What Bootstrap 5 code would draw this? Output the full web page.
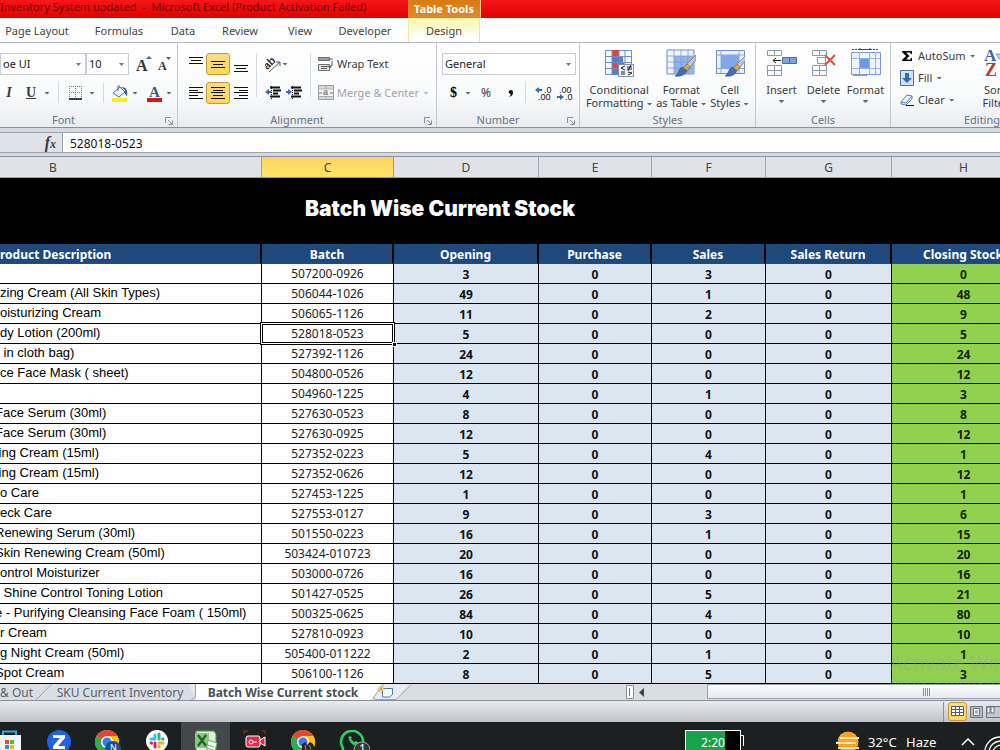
<!DOCTYPE html>
<html lang="en">
<head>
<meta charset="utf-8">
<meta name="viewport" content="width=device-width, initial-scale=1">
<title>Inventory System updated - Microsoft Excel</title>
<link href="https://cdn.jsdelivr.net/npm/bootstrap@5.3.0/dist/css/bootstrap.min.css" rel="stylesheet">
<style>
  body { font-family: "Noto Sans", "Open Sans", sans-serif; font-size: 11px; line-height: 14px; color: #3b3b3b; background: #dfe3e9; }
  button { font: inherit; color: inherit; background: none; border: 0; padding: 0; text-align: center; white-space: nowrap; }
  svg { display: block; flex: none; }
  .fs-12 { font-size: 12px; line-height: 16px; }

  .titlebar { height: 18px; background: linear-gradient(#f51818, #e00000); color: #6a0505; }
  .titlebar .doc-name { width: 408px; line-height: 14px; }
  .tool-tab { width: 73px; font-weight: 700; line-height: 18px; color: #fff; background: linear-gradient(#d97a14, #e08a2c); border-right: 1px solid #f3c48a; }
  .menu-tabs { height: 25px; background: #fff; border-bottom: 1px solid #b3b7bd; }
  .menu-tabs a { color: #444; text-decoration: none; text-align: center; line-height: 26px; }
  .menu-tabs .ctx { background: linear-gradient(#fdf6a8, #fff 80%); border: solid #f1e3a0; border-width: 0 1px; }

  .ribbon { height: 85px; background: linear-gradient(#fff, #fafbfc 60%, #e9ecf0); border-bottom: 1px solid #8a9099; }
  .tool-group { border-right: 1px solid #c3c8cf; height: 84px; overflow: hidden; }
  .tool-body { height: 69px; padding-top: 10px; }
  .tool-row { height: 22px; margin-bottom: 7px; }
  .tool-label { color: #6b7280; text-align: center; position: relative; line-height: 15px; }
  .launcher { position: absolute; right: 4px; top: 5px; }
  .vline { width: 1px; height: 20px; background: #d5d8dd; flex: none; }
  .combo { height: 22px; font-size: 11px; border: 1px solid #c9cdd3; border-radius: 0; padding: 0 2px; color: #222; background: #fff url("data:image/svg+xml,%3Csvg xmlns='http://www.w3.org/2000/svg' width='6' height='3'%3E%3Cpath d='M0 0h5L2.500 3z' fill='%23777'/%3E%3C/svg%3E") no-repeat right 3px center; appearance: none; }
  .tool-on { background: linear-gradient(#fbdc84, #fdd75e); border: 1px solid #c69a3c; border-radius: 3px; }
  .ic-btn { width: 23px; height: 22px; display: flex; align-items: center; justify-content: center; }
  .tall { display: flex; flex-direction: column; align-items: center; line-height: 13px; }
  .tall svg.pic { margin-bottom: 6px; }
  .arrow { display: inline-block; width: 6px; height: 3px; background: #666; clip-path: polygon(0 0, 100% 0, 50% 100%); vertical-align: middle; flex: none; }
  .dim { color: #a0a3a8; }
  .dim .arrow { background: #b5b8bd; }

  .formula-bar { height: 29px; padding: 4px 0 3px; background: #d5d9df; border-bottom: 1px solid #8a9099; }
  .fx-box { width: 63px; background: #dfe3e9; border: 1px solid #9da3ac; border-left: 0; }
  .fx-box span { font: italic 700 16px/19px "Liberation Serif", serif; }
  .fx-box .sub-x { font-size: 12px; }
  .formula-bar input { border: solid #9da3ac; border-width: 1px 0; padding: 2px 7px 0; font-size: 12px; color: #111; outline: 0; min-width: 0; }

  .sheet-area { min-height: 0; background: #fff; position: relative; }
  .grid-sheet { table-layout: fixed; width: calc(100% + 36px); border-collapse: separate; border-spacing: 0; color: #000; }
  .grid-sheet th, .grid-sheet td { padding: 0; text-align: center; overflow: hidden; white-space: nowrap; height: 20px; line-height: 19px; border: solid #000; border-width: 0 1px 1px 0; }
  .grid-sheet .letters th { height: 21px; padding-top: 2px; font-weight: 400; font-size: 12px; line-height: 18px; background: #dfe2e8; color: #444; border-color: #9da3ac; }
  .grid-sheet .letters .picked { background: linear-gradient(#fdd264, #fee667); border-color: #b59a4a; }
  .grid-sheet .banner th { height: 66px; background: #000; color: #fff; font: 900 21px/62px Inter, "Liberation Sans", sans-serif; padding: 0 156px 4px 0; border: 0; }
  .grid-sheet .heads th { background: #1f497d; color: #fff; font-size: 12px; line-height: 17px; padding-top: 2px; font-weight: 700; border-right-width: 2px; border-bottom-color: #3a4657; }
  .grid-sheet .first { text-align: left; }
  .grid-sheet .letters .first { text-align: center; padding-right: 155px; }
  .grid-sheet td { font-size: 12px; line-height: 18px; }
  .grid-sheet td.first { font-family: "Liberation Sans", sans-serif; font-size: 13px; line-height: 17px; padding-bottom: 2px; }
  .grid-sheet td.scrolled { text-indent: -5px; }
  .grid-sheet td.batch { color: #222; }
  .grid-sheet td.qty { background: #dce6f1; color: #111; font-weight: 700; line-height: 17px; padding-top: 2px; }
  .grid-sheet td.closing { background: #92d050; color: #14240a; font-weight: 700; line-height: 17px; padding-top: 2px; }
  .grid-sheet td.current { overflow: visible; position: relative; }
  .cell-cursor { position: absolute; inset: -2px; border: 1px solid #000; box-shadow: inset 0 0 0 1px #fff, inset 0 0 0 2px #000; }
  .cell-cursor::after { content: ""; position: absolute; right: -3px; bottom: -3px; width: 5px; height: 5px; background: #000; border: 1px solid #fff; }
  .watermark { position: absolute; left: 890px; bottom: -6px; color: rgba(160,160,170,.4); font-size: 20px; line-height: 22px; white-space: nowrap; }
  .watermark small { display: block; font-size: 14px; line-height: 16px; }

  .sheet-tabs { height: 17px; background: #d9dde4; border-bottom: 1px solid #8a9099; color: #5a6068; font-size: 12px; line-height: 17px; }
  .sheet-tabs .active-tab { background: #fff; font-weight: 700; color: #4a4f57; }
  .thumb { background: linear-gradient(#fbfcfd, #e6e9f0); border: 1px solid #9da3ac; border-right: 0; height: 15px; margin-left: 61px; padding-left: 215px; }
  .status-strip { height: 21px; background: linear-gradient(#e8eaee, #bfc4cc); }
  .taskbar { height: 28px; background: #1c2021; color: #fff; }
  .task { width: 49px; height: 28px; padding-top: 8px; display: flex; justify-content: center; align-items: flex-start; overflow: hidden; flex: none; position: relative; }
  .task.open-app { background: #43494a; }
  .battery { width: 56px; height: 24px; border: 1px solid #fff; background: linear-gradient(90deg, #16a34a 72%, #000 72%); font-size: 12px; line-height: 23px; text-align: center; }
</style>
</head>
<body class="vh-100 d-flex flex-column overflow-hidden">

<svg width="0" height="0" class="position-absolute" aria-hidden="true">
  <defs>
    <symbol id="tablegrid" viewBox="0 0 30 30"><path d="M1 1h27v24H1z" fill="#eef4fd" stroke="#6e8fc0"/><path d="M8 7h20v18H8z" fill="#8fb4ec"/><path d="M1 7h27M1 13h27M1 19h27M8 1v24M15 1v24M22 1v24" stroke="#7f9ccb" stroke-width=".8" fill="none"/></symbol>
    <symbol id="brush" viewBox="0 0 22 22"><path d="M21 0v5L13 15l-4-3z" fill="#c3c6ca" stroke="#77736c" stroke-width=".7"/><path d="M12 9l3 3-3 4-4-3z" fill="#d9a441" stroke="#8a6420" stroke-width=".6"/><path d="M7 12l5 4c-2 4-6 6-12 5 4-2 3-7 7-9z" fill="#466ea8" stroke="#2f5088" stroke-width=".6"/></symbol>
    <symbol id="chrome" viewBox="0 0 24 24"><circle cx="12" cy="12" r="12" fill="#fbc116"/><path d="M12 12L1.600 6A12 12 0 0 1 22.400 6z" fill="#ea4335"/><path d="M12 12L1.600 6A12 12 0 0 0 12 24l5-9z" fill="#34a853"/><path d="M12 6h10.400A12 12 0 0 1 12 24l5-9z" fill="#fbc116"/><circle cx="12" cy="12" r="6" fill="#fff"/><circle cx="12" cy="12" r="4.600" fill="#3b7ded"/></symbol>
    <symbol id="corner" viewBox="0 0 8 8"><path d="M.5 6V.5H6M3 3l4 4M7.500 3.500v4h-4" stroke="#8a9099" fill="none"/></symbol>
  </defs>
</svg>

<header class="titlebar d-flex overflow-hidden">
  <div class="doc-name text-nowrap">Inventory System updated&nbsp; -&nbsp; Microsoft Excel (Product Activation Failed)</div>
  <div class="tool-tab text-center text-nowrap">Table Tools</div>
</header>

<nav class="menu-tabs d-flex flex-shrink-0" aria-label="Ribbon tabs">
  <a href="#" style="width:74px">Page Layout</a>
  <a href="#" style="width:90px">Formulas</a>
  <a href="#" style="width:38px">Data</a>
  <a href="#" style="width:76px">Review</a>
  <a href="#" style="width:44px">View</a>
  <a href="#" style="width:86px">Developer</a>
  <a href="#" class="ctx" style="width:72px">Design</a>
</nav>

<section class="ribbon d-flex flex-shrink-0 overflow-hidden" aria-label="Ribbon">
  <div class="tool-group flex-shrink-0" style="width:178px">
    <div class="tool-body">
      <div class="tool-row d-flex align-items-center">
        <select class="combo" aria-label="Font" style="width:86px"><option>oe UI</option></select>
        <select class="combo" aria-label="Font size" style="width:43px"><option>10</option></select>
        <button class="ic-btn ms-1" aria-label="Grow font"><svg width="18" height="18"><text x="0" y="16" font-family="Liberation Serif" font-weight="700" font-size="16" fill="#333">A</text><path d="M10 4l3-3 3 3z" fill="#3a64a0"/></svg></button>
        <button class="ic-btn" aria-label="Shrink font" style="width:20px"><svg width="18" height="18"><text x="1" y="15" font-family="Liberation Serif" font-weight="700" font-size="12" fill="#333">A</text><path d="M9 2h5l-2.500 3z" fill="#3a64a0"/></svg></button>
      </div>
      <div class="tool-row d-flex align-items-center">
        <button class="ic-btn" aria-label="Italic" style="width:18px"><i style="font:italic 700 14px 'Liberation Serif',serif">I</i></button>
        <button class="ic-btn" aria-label="Underline" style="width:26px"><u style="font:700 14px 'Liberation Serif',serif">U</u></button>
        <span class="arrow"></span><span class="vline ms-2 me-2"></span>
        <button class="ic-btn" aria-label="Borders" style="width:18px"><svg width="14" height="14"><path d="M.5 0v12M6.500 0v12M12.500 0v12M0 .5h13M0 6.500h13" stroke="#777" stroke-dasharray="1 1" fill="none"/><path d="M0 13h13" stroke="#000" stroke-width="1.500"/></svg></button>
        <span class="arrow ms-1"></span><span class="vline ms-2" style="margin-right:6px"></span>
        <button class="ic-btn" aria-label="Fill color" style="width:18px"><svg width="17" height="17"><path d="M2 8l7-6 5 5-6 5z" fill="#e8f0fa" stroke="#4a6fa5"/><path d="M7 6V1h2" stroke="#4a6fa5" fill="none"/><path d="M10 2c6 0 7 4 6 9-2-1-3-4-2-6z" fill="#2f5fae"/><path d="M1 13h15v4H1z" fill="#f7ee1d"/></svg></button>
        <span class="arrow ms-1"></span>
        <button class="ic-btn ms-1" aria-label="Font color" style="width:24px"><svg width="17" height="17"><text x="3" y="12" font-family="Liberation Serif" font-weight="700" font-size="15" fill="#3a5a94">A</text><path d="M1 13h15v4H1z" fill="#d01a1a"/></svg></button>
        <span class="arrow"></span>
      </div>
    </div>
    <div class="tool-label" style="padding-right:50px">Font<svg class="launcher" width="8" height="8"><use href="#corner"/></svg></div>
  </div>

  <div class="tool-group flex-shrink-0" style="width:259px">
    <div class="tool-body d-flex">
      <div class="ps-1" style="width:78px">
        <div class="tool-row d-flex">
          <button class="ic-btn ms-1" aria-label="Top align" style="width:20px"><svg width="14" height="20"><path d="M0 3.500h14M2 6.500h10M0 9.500h14" stroke="#111"/></svg></button>
          <button class="ic-btn tool-on" aria-label="Middle align" style="width:24px"><svg width="14" height="14"><path d="M0 4.500h14M2 7.500h10M0 10.500h14" stroke="#111"/></svg></button>
          <button class="ic-btn" aria-label="Bottom align" style="width:22px"><svg width="14" height="20"><path d="M0 11.500h14M2 14.500h10M0 17.500h14" stroke="#111"/></svg></button>
        </div>
        <div class="tool-row d-flex">
          <button class="ic-btn ms-1" aria-label="Align left" style="width:20px"><svg width="14" height="12"><path d="M0 .5h14M0 3.500h9M0 5.500h14M0 8.500h9M0 11.500h14" stroke="#111"/></svg></button>
          <button class="ic-btn tool-on" aria-label="Center" style="width:24px"><svg width="14" height="12"><path d="M0 .5h14M2 3.500h10M0 5.500h14M2 8.500h10M0 11.500h14" stroke="#111"/></svg></button>
          <button class="ic-btn" aria-label="Align right" style="width:22px"><svg width="14" height="12"><path d="M0 .5h14M5 3.500h9M0 5.500h14M5 8.500h9M0 11.500h14" stroke="#111"/></svg></button>
        </div>
      </div>
      <span class="vline h-75"></span>
      <div class="ps-2" style="width:53px">
        <div class="tool-row d-flex align-items-center">
          <button aria-label="Orientation"><svg width="17" height="17"><text transform="rotate(-45 5 10)" x="0" y="11" font-family="Liberation Sans" font-weight="700" font-size="11" fill="#333">ab</text><path d="M4 16L15 6M11 6h4v4" stroke="#555" fill="none"/></svg></button><span class="arrow"></span>
        </div>
        <div class="tool-row d-flex align-items-center">
          <button aria-label="Decrease indent"><svg width="17" height="14"><path d="M5 1.500h10M8 4.500h8M8 7.500h5M5 10.500h10" stroke="#111" stroke-width="2"/><path d="M6.500 0v14" stroke="#111" stroke-dasharray="1 1"/><path d="M0 6l4-3v2h2v2H4v2z" fill="#3a6bb0"/></svg></button>
          <button class="ms-1" aria-label="Increase indent"><svg width="17" height="14"><path d="M5 1.500h10M8 4.500h8M8 7.500h5M5 10.500h10" stroke="#111" stroke-width="2"/><path d="M6.500 0v14" stroke="#111" stroke-dasharray="1 1"/><path d="M6 6L2 3v2H0v2h2v2z" fill="#3a6bb0"/></svg></button>
        </div>
      </div>
      <span class="vline h-75"></span>
      <div style="padding-left:7px">
        <div class="tool-row d-flex align-items-center">
          <button class="d-flex align-items-center"><svg style="margin-right:3px" width="16" height="16"><path d="M.5 1.500h11v3H.5zM.5 8.500h11v6H.5z" fill="#dce7f7" stroke="#68707c"/><path d="M0 3h15M3 10.500h8M3 12.500h6" stroke="#6e5540"/><path d="M14 5v5h-2l1 2" stroke="#2f5fae" fill="none"/></svg>Wrap Text</button>
        </div>
        <div class="tool-row d-flex align-items-center">
          <button class="d-flex align-items-center dim"><svg style="margin-right:3px" width="16" height="16"><path d="M.5.5h15v14H.5z" fill="#d7d9dc" stroke="#9a9da2"/><path d="M0 4h16M0 11.500h16M8 0v4M8 11v4" stroke="#aaa"/><path d="M1 4.500h14v6.500H1z" fill="#f3f3f3"/><text x="5" y="10" font-size="9" font-family="Liberation Sans" font-weight="700" fill="#777">a</text><path d="M1 8h3M12 8h3" stroke="#777"/></svg>Merge &amp; Center<span class="arrow ms-1"></span></button>
        </div>
      </div>
    </div>
    <div class="tool-label" style="padding-right:20px">Alignment<svg class="launcher" width="8" height="8"><use href="#corner"/></svg></div>
  </div>

  <div class="tool-group flex-shrink-0" style="width:143px">
    <div class="tool-body" style="padding-left:5px">
      <div class="tool-row"><select class="combo d-block" aria-label="Number format" style="width:134px"><option>General</option></select></div>
      <div class="tool-row d-flex align-items-center">
        <button class="ic-btn" aria-label="Currency"><b class="text-black" style="font:700 14px 'Liberation Serif',serif">$</b></button>
        <span class="arrow"></span>
        <button class="ic-btn fs-12" aria-label="Percent" style="width:30px">%</button>
        <button class="ic-btn" aria-label="Comma" style="width:20px"><svg width="6" height="9"><path d="M3 1a2 2 0 0 1 2 2c0 3-1 4-4 5 1-1 2-2 1.500-3A2 2 0 0 1 3 1z" fill="#111"/></svg></button>
        <span class="vline ms-1"></span>
        <button class="ic-btn ms-2" aria-label="Increase decimal" style="width:18px"><svg width="17" height="15" font-family="Liberation Sans" font-size="9" fill="#111"><text x="9" y="7">.0</text><text x="3" y="14">.00</text><path d="M0 4l4-3v2h3v2H4v2z" fill="#3a6bb0"/></svg></button>
        <button class="ic-btn ms-1" aria-label="Decrease decimal" style="width:18px"><svg width="17" height="15" font-family="Liberation Sans" font-size="9" fill="#111"><text x="2" y="7">.00</text><text x="8" y="14">.0</text><path d="M7 11L3 8v2H0v2h3v2z" fill="#3a6bb0"/></svg></button>
      </div>
    </div>
    <div class="tool-label" style="padding-right:20px">Number<svg class="launcher" width="8" height="8"><use href="#corner"/></svg></div>
  </div>

  <div class="tool-group flex-shrink-0" style="width:176px">
    <div class="tool-body d-flex pt-1">
      <button class="tall" style="width:79px"><svg class="pic" width="30" height="30"><path d="M1.500 3.500h26v24h-26z" fill="#f4f8fe" stroke="#6e8fc0"/><path d="M8 3h7v6H8zM8 15h12v6H8z" fill="#e2483c"/><path d="M8 9h11v6H8zM8 21h6v6H8z" fill="#4f7fd0"/><path d="M1.500 9.500h26M1.500 15.500h26M1.500 21.500h26M8 3v24M15 3v24M21 3v24" stroke="#6e8fc0" fill="none"/><path d="M14.500 17.500h15v12h-15z" fill="#f2f4f6" stroke="#8090a5"/><path d="M21 19l-4 2 4 2M17 25h4M23 20h5M23 22h5M27 18l-3 6M17 27h4M24 25l4 1-4 2" stroke="#222" fill="none"/></svg>Conditional<span>Formatting <span class="arrow"></span></span></button>
      <button class="tall" style="width:46px"><svg class="pic" width="30" height="30"><use href="#tablegrid" x="0" y="2" width="30" height="30"/><use href="#brush" x="9" y="8" width="22" height="22"/></svg>Format<span>as Table <span class="arrow"></span></span></button>
      <button class="tall" style="width:51px"><svg class="pic" width="30" height="30"><path d="M1.500 3.500h28v23h-28z" fill="#eaf2fd" stroke="#6e8fc0"/><path d="M6 8h18v13H6z" fill="#7ea8ea"/><path d="M1 8h28M1 21.500h28M6 3v23M24 3v23" stroke="#8aa8d2"/><use href="#brush" x="10" y="8" width="22" height="22"/></svg>Cell<span>Styles <span class="arrow"></span></span></button>
    </div>
    <div class="tool-label">Styles</div>
  </div>

  <div class="tool-group flex-shrink-0" style="width:135px">
    <div class="tool-body d-flex pt-1 ps-1">
      <button class="tall" style="width:43px"><svg class="pic" width="32" height="30"><g fill="#fff" stroke="#8a9bb4"><path d="M1.500 3.500h14v5h-14zM8.500 3v5M1.500 18.500h14v10h-14zM8.500 18v10M1 23.500h14"/></g><path d="M16.500 10.500h14v6h-14z" fill="#7da4e2" stroke="#466ea8"/><path d="M23.500 10v6" stroke="#466ea8"/><path d="M7 13.500h8M10 11l-3 2.500 3 2.500" stroke="#222" fill="none"/></svg>Insert<span class="arrow mt-1"></span></button>
      <button class="tall" style="width:41px"><svg class="pic" width="32" height="30"><g fill="#fff" stroke="#8a9bb4"><path d="M4.500 3.500h14v5h-14zM11.500 3v5M4.500 18.500h14v10h-14zM11.500 18v10M4 23.500h14"/></g><path d="M9.500 10.500h8v6h-8z" fill="none" stroke="#333" stroke-dasharray="1 1"/><path d="M17 8l10 10M27 8L17 18" stroke="#e4513d" stroke-width="2"/></svg>Delete<span class="arrow mt-1"></span></button>
      <button class="tall" style="width:43px"><svg class="pic" width="32" height="30"><path d="M2 2.500h27M10 2.500h10M10 1v3M20 1v3" stroke="#2a4a7c" stroke-dasharray="2 1"/><path d="M1.500 5.500h29v22h-29z" fill="#edf4fd" stroke="#7f9bc6"/><path d="M1 11.500h29M1 21.500h29M9.500 5v22M19.500 5v22M25.500 5v22" stroke="#9bb3d8"/><path d="M10 12h9v9h-9z" fill="#6d9ae4"/><path d="M3 28h14" stroke="#7f9bc6" stroke-width="2"/></svg>Format<span class="arrow mt-1"></span></button>
    </div>
    <div class="tool-label">Cells</div>
  </div>

  <div class="tool-group flex-grow-1 border-end-0">
    <div class="tool-body d-flex pt-1 ps-2">
      <div class="d-flex flex-column flex-shrink-0" style="width:84px">
        <button class="d-flex align-items-center" style="height:18px"><svg style="margin:0 5px 0 2px" width="12" height="12"><path d="M1 1h10v3h-1L9 2.500H5L8.500 6 5 9.500h4.500L10 8h1v3H1v-1l4-4-4-4z" fill="#000"/></svg>AutoSum<span class="arrow ms-1"></span></button>
        <button class="d-flex align-items-center" style="height:26px"><svg style="margin:0 4px 0 1px" width="14" height="16"><path d="M.5.5h13v15H.5z" fill="#d3e2f8" stroke="#56709c"/><path d="M5 3h4v5h3l-5 5-5-5h3z" fill="#3568c4"/></svg>Fill<span class="arrow ms-1"></span></button>
        <button class="d-flex align-items-center" style="height:18px"><svg style="margin:0 4px 0 1px" width="14" height="14"><path d="M1 9l6-7 5 1v3l-6 6-5-1z" fill="#e8f1fa" stroke="#5f7fa8"/><path d="M1 9l5 1 6-7" stroke="#5f7fa8" fill="none"/><path d="M6 12.500h8" stroke="#111"/></svg>Clear<span class="arrow ms-1"></span></button>
      </div>
      <button class="tall flex-shrink-0" style="width:34px"><svg class="pic" width="32" height="30" font-family="Liberation Serif" font-weight="700"><path d="M12 7h19L24 18v9l-4-3v-6z" fill="#ccd2da" stroke="#8a93a0"/><text x="0" y="14" font-size="17" fill="#3c63ad">A</text><text x="1" y="29" font-size="18" fill="#b3402f">Z</text></svg>Sort &amp;<span>Filter <span class="arrow"></span></span></button>
    </div>
    <div class="tool-label text-end">Editing</div>
  </div>
</section>

<div class="formula-bar d-flex flex-shrink-0">
  <div class="fx-box text-end" style="padding-right:6px"><span>f</span><span class="sub-x">x</span></div>
  <input class="flex-grow-1" type="text" value="528018-0523" aria-label="Formula">
</div>

<main class="sheet-area flex-grow-1 overflow-hidden">
  <table class="grid-sheet">
    <colgroup><col><col style="width:132px"><col style="width:145px"><col style="width:113px"><col style="width:114px"><col style="width:126px"><col style="width:144px"></colgroup>
    <thead>
      <tr class="letters"><th class="first">B</th><th class="picked">C</th><th>D</th><th>E</th><th>F</th><th>G</th><th>H</th></tr>
      <tr class="banner"><th colspan="7">Batch Wise Current Stock</th></tr>
      <tr class="heads"><th class="first">roduct Description</th><th>Batch</th><th>Opening</th><th>Purchase</th><th>Sales</th><th>Sales Return</th><th>Closing Stock</th></tr>
    </thead>
    <tbody id="stock"></tbody>
  </table>
  <div class="watermark" aria-hidden="true">Activate Windows<small>Go to Settings to activate</small></div>
</main>

<div class="sheet-tabs d-flex flex-shrink-0">
  <button style="width:34px" class="text-start">&amp; Out</button>
  <svg width="18" height="16"><path d="M18 .5H17L5 13l-3 2.500" stroke="#9da3ac" fill="none"/></svg>
  <button style="width:136px">SKU Current Inventory</button>
  <svg width="8" height="16"><path d="M0 0l8 16V0z" fill="#fff" opacity=".3"/><path d="M7.500 0v13l-4 2.500" stroke="#9da3ac" fill="none"/></svg>
  <button class="active-tab" style="width:174px">Batch Wise Current stock</button>
  <svg width="42" height="16"><path d="M0 0h14L2 15H0z" fill="#fff"/><path d="M13.500 0L3 14l3 1.500h20L41 .5" stroke="#9da3ac" fill="#e9ecf1"/><path d="M12.500 4.500h10v6l-3 2.500h-7z" fill="#f6faff" stroke="#4f76b8"/><circle cx="11" cy="5" r="2.500" fill="#fff3c4"/><path d="M11 1v8M7 5h8M8.500 2.500l5 5M13.500 2.500l-5 5" stroke="#d9962e" stroke-width=".8"/></svg>
  <div class="ms-auto d-flex" style="width:374px">
    <svg width="20" height="16"><path d="M.5 1.500h7v13h-7z" fill="#fff" stroke="#8a9099"/><path d="M3.500 4v8" stroke="#777"/><path d="M18 4v9l-5-4.500z" fill="#444"/></svg>
    <div class="thumb flex-grow-1 d-flex align-items-center"><svg width="8" height="8"><path d="M.5 0v8M2.500 0v8M4.500 0v8M6.500 0v8" stroke="#8a9099"/></svg></div>
  </div>
</div>

<div class="status-strip d-flex flex-shrink-0 justify-content-end align-items-center overflow-hidden">
  <span class="vline me-1" style="background:#8a9099"></span>
  <button class="ic-btn tool-on" aria-label="Normal view" style="width:19px;height:19px"><svg width="13" height="11"><path d="M.5.5h12v9H.5zM0 3.500h13M0 6.500h13M4.500 0v10M8.500 0v10" fill="#fff" stroke="#555d6b"/></svg></button>
  <button class="ic-btn" aria-label="Page layout view" style="width:19px"><svg width="13" height="12"><path d="M.5.5h12v11H.5z" fill="#b9bec6" stroke="#6b7280"/><path d="M3.500 2.500h6v7h-6z" fill="#fff" stroke="#6b7280"/><path d="M5 5h3M5 7h3" stroke="#777"/></svg></button>
  <button aria-label="Page break preview" style="width:14px"><svg width="14" height="12"><path d="M.5.5h15v11H.5z" fill="#c3c7ce" stroke="#6b7280"/><path d="M1 1h3v6H1zM5 1h3v6H5z" fill="#fff" stroke="#6b7280"/></svg></button>
</div>

<footer class="taskbar d-flex flex-shrink-0 overflow-hidden">
  <button class="task justify-content-start" aria-label="Store" style="width:34px"><svg width="22" height="26"><path d="M3 5V1.500h13V5" stroke="#35a8dc" stroke-width="2" fill="none"/><path d="M0 5h21v21H0z" fill="#f4f6f8"/><path d="M5 10h4v4H5z" fill="#e5532d"/><path d="M10 10h4v4h-4z" fill="#6fae2e"/><path d="M5 15h4v4H5z" fill="#2f8fd8"/><path d="M10 15h4v4h-4z" fill="#f0b323"/></svg></button>
  <button class="task" aria-label="Zoom"><svg width="24" height="24"><circle cx="12" cy="12" r="12" fill="#1f62ea"/><path d="M6 5h12v3l-7 8h7v3H6v-3l7-8H6z" fill="#fff"/></svg></button>
  <button class="task" aria-label="Chrome"><svg width="26" height="24"><use href="#chrome" width="24" height="24"/><circle cx="18" cy="19" r="8" fill="#17538f"/><text x="15" y="21" font-size="9" fill="#fff" font-family="Noto Sans">N</text></svg></button>
  <button class="task" aria-label="Slack"><svg width="22" height="22"><circle cx="11" cy="11" r="11" fill="#fff"/><g stroke-width="3" stroke-linecap="round" fill="none"><path d="M9 5v3M5 9h4" stroke="#36c5f0"/><path d="M13 4v5M16.500 9h.5" stroke="#2eb67d"/><path d="M13 13h4M13 16v1" stroke="#ecb22e"/><path d="M9 13v4M5 13h.5" stroke="#e01e5a"/></g></svg></button>
  <button class="task open-app" aria-label="Excel"><svg width="24" height="24"><path d="M2 1h18l2 3v20H2z" fill="#dff0d8" stroke="#4a9a4a"/><path d="M1 3h14v15H1z" fill="#8cc97d"/><path d="M4 5l8 11M12 5L4 16" stroke="#1e6b2b" stroke-width="2.500"/><path d="M14 10l9 3-3 11h-8z" fill="#f4fbf2" stroke="#6fae6f"/><path d="M14 15l6 2M13 18l6 2" stroke="#6fae6f"/></svg></button>
  <button class="task" aria-label="Screen recorder"><svg width="24" height="24"><path d="M1 4V1h4M19 1h3v3" stroke="#a33" fill="none"/><rect x="3" y="6" width="14" height="11" rx="2" fill="#e8274b" stroke="#fff"/><path d="M17 10l5-3v9l-5-3z" fill="#e8274b" stroke="#fff"/><circle cx="8" cy="12" r="2" fill="none" stroke="#fff"/><path d="M10 12h4" stroke="#fff"/></svg></button>
  <button class="task" aria-label="Chrome profile"><svg width="26" height="24"><use href="#chrome" width="24" height="24"/><path d="M11 20v-6l3-2 2 3 3-3 3 2 2 5v5H11z" fill="#2b2621"/><path d="M14 15l1 5M18 15l2 4" stroke="#a8946a"/></svg></button>
  <button class="task" aria-label="WhatsApp"><svg width="34" height="24" viewBox="-5 0 34 24"><path d="M1 24l1-6A11 11 0 1 1 7 22z" fill="#1c2021" stroke="#25d366" stroke-width="2.500"/><path d="M8 6c-2 3 3 10 8 10l2-3-3-2-2 1-3-3 1-2z" fill="#25d366"/><circle cx="21" cy="20" r="8" fill="#333839" stroke="#aaa"/><text x="18" y="23" font-size="12" fill="#fff" font-family="Noto Sans">1</text></svg></button>
  <div class="ms-auto d-flex" style="width:315px;padding-top:8px">
    <div class="battery flex-shrink-0">2:20</div>
    <svg width="4" height="16"><path d="M0 5.500h2.500V16" stroke="#fff" fill="none"/></svg>
    <svg width="26" height="24" style="margin-left:91px"><circle cx="12" cy="12" r="10.500" fill="#f7a51e"/><path d="M4 8h19M0 13h20M2 18h21" stroke="#fde6b0" stroke-width="2"/></svg>
    <div class="d-flex text-nowrap" style="padding:4px 0 0 6px;font-size:13px;line-height:16px"><span style="width:38px">32°C</span><span style="width:55px">Haze</span></div>
    <svg width="14" height="24"><path d="M1 15l6-6 6 6" stroke="#fff" stroke-width="1.500" fill="none"/></svg>
    <svg class="ms-2" width="18" height="24" fill="none" stroke="#fff"><path d="M2 20A15 15 0 0 1 17 7M6 21A12 12 0 0 1 17 11M10 23a8 8 0 0 1 8-8" stroke-width="1.300"/></svg>
  </div>
</footer>

<script>
  // description, batch, opening, purchase, sales, sales return, closing stock
  const stock = [
    ["", "507200-0926", 3, 0, 3, 0, 0],
    ["zing Cream (All Skin Types)", "506044-1026", 49, 0, 1, 0, 48],
    ["oisturizing Cream", "506065-1126", 11, 0, 2, 0, 9],
    ["dy Lotion (200ml)", "528018-0523", 5, 0, 0, 0, 5],
    [" in cloth bag)", "527392-1126", 24, 0, 0, 0, 24],
    ["ce Face Mask ( sheet)", "504800-0526", 12, 0, 0, 0, 12],
    ["", "504960-1225", 4, 0, 1, 0, 3],
    ["Face Serum (30ml)", "527630-0523", 8, 0, 0, 0, 8],
    ["Face Serum (30ml)", "527630-0925", 12, 0, 0, 0, 12],
    ["ting Cream (15ml)", "527352-0223", 5, 0, 4, 0, 1],
    ["ting Cream (15ml)", "527352-0626", 12, 0, 0, 0, 12],
    ["o Care", "527453-1225", 1, 0, 0, 0, 1],
    ["eck Care", "527553-0127", 9, 0, 3, 0, 6],
    ["Renewing Serum (30ml)", "501550-0223", 16, 0, 1, 0, 15],
    ["Skin Renewing Cream (50ml)", "503424-010723", 20, 0, 0, 0, 20],
    ["ontrol Moisturizer", "503000-0726", 16, 0, 0, 0, 16],
    [" Shine Control Toning Lotion", "501427-0525", 26, 0, 5, 0, 21],
    ["e - Purifying Cleansing Face Foam ( 150ml)", "500325-0625", 84, 0, 4, 0, 80],
    ["r Cream", "527810-0923", 10, 0, 0, 0, 10],
    ["g Night Cream (50ml)", "505400-011222", 2, 0, 1, 0, 1],
    ["Spot Cream", "506100-1126", 8, 0, 5, 0, 3]
  ];
  // descriptions whose first letter is partly scrolled out of view
  const partlyScrolled = /^(Face|ting|Renewing|Skin|e -|Spot)/;
  const body = document.getElementById("stock");
  stock.forEach((item, r) => {
    const row = body.insertRow();
    item.forEach((value, c) => {
      const cell = row.insertCell();
      cell.textContent = String(value).replace(/^ /, "\u00a0");
      cell.className = c === 0 ? "first" : c === 1 ? "batch" : c === 6 ? "closing" : "qty";
      if (c === 0 && partlyScrolled.test(value)) cell.classList.add("scrolled");
      if (r === 3 && c === 1) {
        cell.classList.add("current");
        cell.insertAdjacentHTML("beforeend", '<span class="cell-cursor"></span>');
      }
    });
  });
</script>
<script src="https://cdn.jsdelivr.net/npm/bootstrap@5.3.0/dist/js/bootstrap.bundle.min.js"></script>
</body>
</html>
